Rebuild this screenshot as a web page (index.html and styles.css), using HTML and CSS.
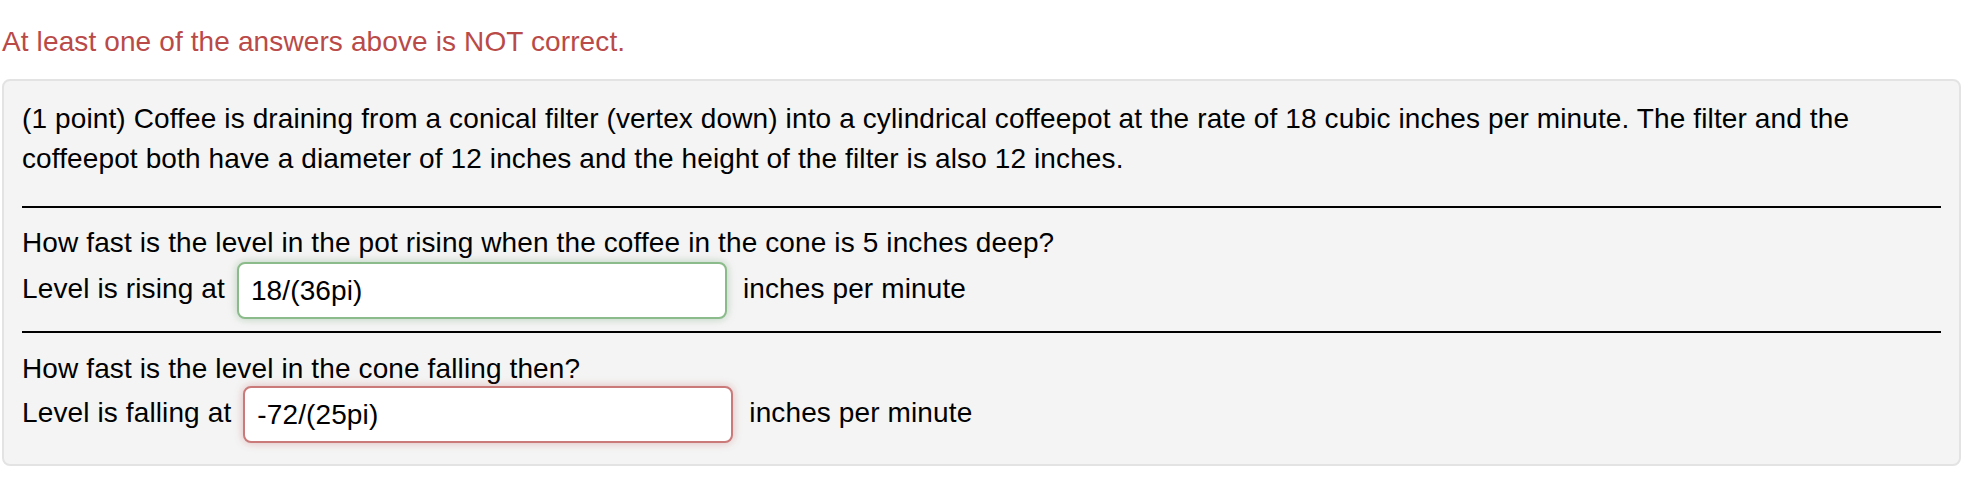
FILE: index.html
```html
<!DOCTYPE html>
<html lang="en">
<head>
<meta charset="utf-8">
<title>Problem</title>
<link rel="stylesheet" href="styles.css">
</head>
<body>
<div class="status-msg">At least one of the answers above is NOT correct.</div>
<div class="problem">
  <p class="statement">(1 point) Coffee is draining from a conical filter (vertex down) into a cylindrical coffeepot at the rate of 18 cubic inches per minute. The filter and the coffeepot both have a diameter of 12 inches and the height of the filter is also 12 inches.</p>
  <hr class="rule rule-first">
  <p class="question">How fast is the level in the pot rising when the coffee in the cone is 5 inches deep?</p>
  <div class="answer-row answer-row-first">
    <span class="label">Level is rising at</span>
    <input class="answer answer-correct" type="text" value="18/(36pi)">
    <span class="units">inches per minute</span>
  </div>
  <hr class="rule rule-second">
  <p class="question">How fast is the level in the cone falling then?</p>
  <div class="answer-row answer-row-second">
    <span class="label">Level is falling at</span>
    <input class="answer answer-wrong" type="text" value="-72/(25pi)">
    <span class="units">inches per minute</span>
  </div>
</div>
</body>
</html>
```
FILE: styles.css
```css
html, body {
  margin: 0;
  padding: 0;
  background: #ffffff;
}

body {
  font-family: "Liberation Sans", Arial, Helvetica, sans-serif;
  font-size: 28px;
  line-height: 40px;
  letter-spacing: 0.12px;
  color: #000000;
}

.status-msg {
  color: #b94a48;
  padding-top: 22px;
  margin: 0 0 17px 2px;
  height: 40px;
}

.problem {
  box-sizing: border-box;
  width: 1959px;
  margin-left: 2px;
  background: #f4f4f4;
  border: 2px solid #e3e3e3;
  border-radius: 8px;
  padding: 18px 18px 21px 18px;
}

.statement {
  margin: 0;
}

.rule {
  border: 0;
  height: 2px;
  background: #000000;
  margin: 0;
}

.rule-first {
  margin-top: 27px;
  margin-bottom: 15px;
}

.rule-second {
  margin-top: 12px;
  margin-bottom: 16px;
}

.question {
  margin: 0;
}

.answer-row {
  display: flex;
  align-items: center;
  gap: 12px;
}

.answer-row-first {
  margin-top: -1px;
}

.answer-row-second {
  margin-top: -3px;
}

.label {
  padding-bottom: 4px;
}

.units {
  padding-bottom: 4px;
  margin-left: 4px;
}

.answer {
  box-sizing: border-box;
  width: 490px;
  height: 57px;
  margin: 0;
  padding: 0 12px;
  font-family: "Liberation Sans", Arial, Helvetica, sans-serif;
  font-size: 28px;
  line-height: 40px;
  letter-spacing: 0.12px;
  color: #000000;
  background: #ffffff;
  border: 2px solid #cccccc;
  border-radius: 8px;
  outline: none;
}

.answer-correct {
  border-color: #8bbb8a;
  box-shadow: 0 0 8px rgba(70, 136, 71, 0.35);
}

.answer-wrong {
  border-color: #c97a79;
  box-shadow: 0 0 8px rgba(185, 74, 72, 0.35);
}
```
